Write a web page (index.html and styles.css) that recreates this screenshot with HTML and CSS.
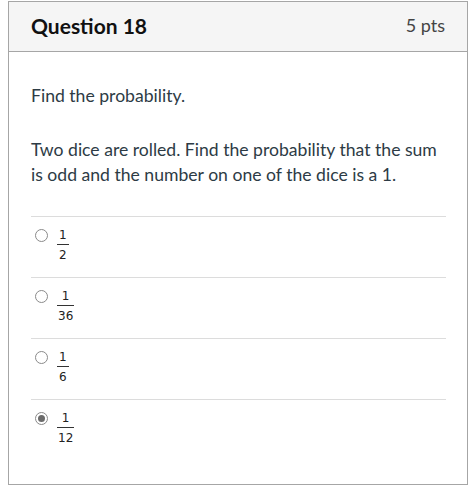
FILE: index.html
```
<!DOCTYPE html>
<html>
<head>
<meta charset="utf-8">
<link rel="stylesheet" href="styles.css">
</head>
<body>
<div class="card">
  <div class="header">
    <span class="title">Question 18</span>
    <span class="pts">5 pts</span>
  </div>
  <div class="body">
    <p class="para">Find the probability.</p>
    <p class="para second">Two dice are rolled. Find the probability that the sum is odd and the number on one of the dice is a 1.</p>
    <div class="answers">
      <div class="answer">
        <span class="radio"></span>
        <span class="frac"><span class="num">1</span><span class="den">2</span></span>
      </div>
      <div class="answer">
        <span class="radio"></span>
        <span class="frac"><span class="num">1</span><span class="den">36</span></span>
      </div>
      <div class="answer">
        <span class="radio"></span>
        <span class="frac"><span class="num">1</span><span class="den">6</span></span>
      </div>
      <div class="answer">
        <span class="radio checked"></span>
        <span class="frac"><span class="num">1</span><span class="den">12</span></span>
      </div>
    </div>
  </div>
</div>
</body>
</html>
```
FILE: styles.css
```
html, body {
  margin: 0;
  padding: 0;
  background: #fff;
}
.card {
  margin: 1px 0 0 8px;
  width: 458px;
  height: 482px;
  border: 1px solid #a6a6a6;
  font-family: Lato, "Liberation Sans", sans-serif;
  color: #2d3b45;
  box-sizing: content-box;
}
.header {
  box-sizing: border-box;
  height: 50px;
  background: #f5f5f5;
  border-bottom: 1px solid #a6a6a6;
  display: flex;
  align-items: center;
  justify-content: space-between;
  padding: 0 22px 3px 22px;
}
.title {
  font-size: 21px;
  font-weight: 700;
  color: #111;
}
.pts {
  font-size: 18px;
  color: #444;
}
.body {
  padding: 0 21px 0 22px;
}
.para {
  margin: 0;
  font-size: 17.6px;
  line-height: 25px;
}
.para:first-child {
  padding-top: 31px;
}
.second {
  margin-top: 29px;
}
.answers {
  margin-top: 29px;
}
.answer {
  border-top: 1px solid #dcdcdc;
  height: 61px;
  box-sizing: border-box;
  display: flex;
  align-items: flex-start;
  padding-top: 11px;
  padding-left: 4px;
}
.radio {
  width: 11px;
  height: 11px;
  border: 1px solid #8a8a8a;
  border-radius: 50%;
  margin-top: 1px;
  margin-right: 9px;
  background: #fff;
  position: relative;
}
.radio.checked::after {
  content: "";
  position: absolute;
  left: 2px;
  top: 2px;
  width: 7px;
  height: 7px;
  border-radius: 50%;
  background: #6b6b6b;
}
.frac {
  display: inline-flex;
  flex-direction: column;
  align-items: stretch;
  text-align: center;
  font-family: "DejaVu Sans", Verdana, sans-serif;
  font-size: 12px;
  color: #222;
}
.num {
  line-height: 14px;
  padding: 0 2px 2px;
  border-bottom: 1px solid #333;
}
.den {
  line-height: 14px;
  padding: 3px 1px 0;
}
```
